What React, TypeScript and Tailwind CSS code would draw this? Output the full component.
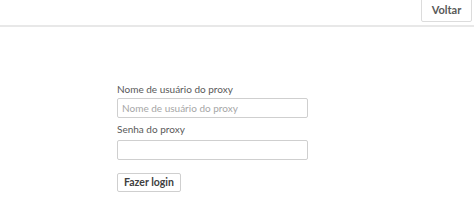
import React from "react";

export default function App() {
  return (
    <div className="w-[474px] h-[220px] bg-white overflow-hidden" style={{ fontFamily: "Lato, 'Open Sans', sans-serif" }}>
      <div className="h-[27px] border-b-2 border-[#e8e8e8] flex justify-end items-start pr-[2px]">
        <button className="mt-[-2px] h-[24px] w-[51px] border border-[#dcdcdc] rounded-[2px] bg-white text-[11px] font-bold text-[#595959] flex items-center justify-center">
          Voltar
        </button>
      </div>
      <div className="ml-[117px] mt-[55px] w-[191px] flex flex-col">
        <label className="text-[10px] text-[#595959] leading-[14px]">Nome de usuário do proxy</label>
        <input
          className="mt-[2px] h-[20px] w-full border border-[#cfcfcf] rounded-[2px] px-[4px] text-[10px] text-[#595959] placeholder:text-[#a6a6a6] outline-none"
          placeholder="Nome de usuário do proxy"
        />
        <label className="mt-[4px] text-[10px] text-[#595959] leading-[14px]">Senha do proxy</label>
        <input
          type="password"
          className="mt-[4px] h-[20px] w-full border border-[#cfcfcf] rounded-[2px] px-[4px] text-[10px] outline-none"
        />
        <div className="mt-[13px]">
          <button className="h-[19px] w-[64px] border border-[#cfcfcf] rounded-[2px] bg-white text-[10.5px] font-bold text-[#404040] flex items-center justify-center">
            Fazer login
          </button>
        </div>
      </div>
    </div>
  );
}
